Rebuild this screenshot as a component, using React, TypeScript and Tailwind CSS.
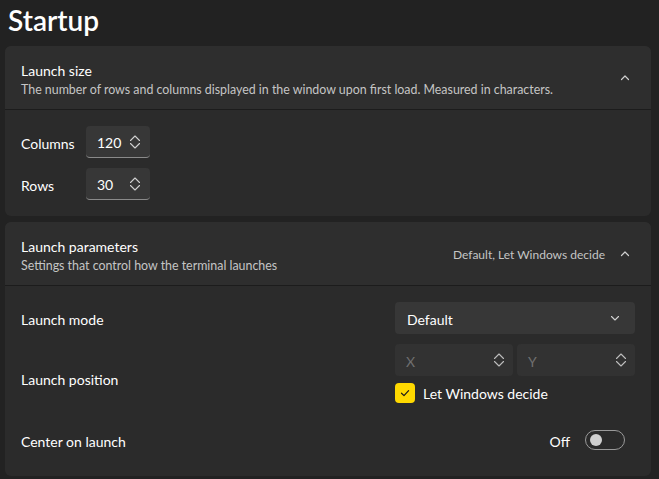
import React from "react"

const font = { fontFamily: 'Lato, "Noto Sans", sans-serif' }

function ChevronUp() {
  return (
    <svg width="12" height="12" viewBox="0 0 12 12" fill="none" className="text-[#d0d0d0]">
      <path d="M2.5 7.5 L6 4 L9.5 7.5" stroke="currentColor" strokeWidth="1.2" strokeLinecap="round" strokeLinejoin="round" />
    </svg>
  )
}

function ChevronDown() {
  return (
    <svg width="12" height="12" viewBox="0 0 12 12" fill="none" className="text-[#d0d0d0]">
      <path d="M2.5 4.5 L6 8 L9.5 4.5" stroke="currentColor" strokeWidth="1.1" strokeLinecap="round" strokeLinejoin="round" />
    </svg>
  )
}

function Spinner({ dim }: { dim?: boolean }) {
  return (
    <svg width="12" height="16" viewBox="0 0 12 16" fill="none" className={dim ? "text-[#bdbdbd]" : "text-[#cfcfcf]"}>
      <path d="M1.5 6.5 L6 2 L10.5 6.5" stroke="currentColor" strokeWidth="1.1" strokeLinecap="round" strokeLinejoin="round" />
      <path d="M1.5 9.5 L6 14 L10.5 9.5" stroke="currentColor" strokeWidth="1.1" strokeLinecap="round" strokeLinejoin="round" />
    </svg>
  )
}

function NumberBox({ value }: { value: string }) {
  return (
    <div className="flex h-[32px] w-[64px] items-center justify-between rounded-[4px] border-b border-[#8a8a8a] bg-[#373737] pl-[11px] pr-[9px]">
      <span className="pt-[2px] text-[14px] text-white">{value}</span>
      <Spinner />
    </div>
  )
}

function CardHeader({ title, desc, value }: { title: string; desc: string; value?: string }) {
  return (
    <div className="flex h-[64px] items-center justify-between border-b border-[#1c1c1c] bg-[#2e2e2e] pl-[16px] pr-[20px]">
      <div className="flex flex-col pt-[3px]">
        <span className="text-[14px] leading-[20px] text-white">{title}</span>
        <span className="pt-[1px] text-[12.4px] leading-[16px] text-[#c5c5c5]">{desc}</span>
      </div>
      <div className="flex items-center gap-[14px]">
        {value && <span className="pt-[2px] text-[12px] text-[#c5c5c5]">{value}</span>}
        <ChevronUp />
      </div>
    </div>
  )
}

export default function App() {
  return (
    <div className="h-[479px] w-[659px] overflow-hidden bg-[#222222] text-white" style={font}>
      <div className="flex h-[46px] items-start pl-[8px]">
        <h1 className="text-[28px] font-semibold leading-[40px]">Startup</h1>
      </div>

      <div className="ml-[5px] flex w-[646px] flex-col gap-[6px]">
        <div className="overflow-hidden rounded-[6px] bg-[#2b2b2b]">
          <CardHeader
            title="Launch size"
            desc="The number of rows and columns displayed in the window upon first load. Measured in characters."
          />
          <div className="flex flex-col gap-[10px] px-[16px] py-[16px]">
            <div className="flex items-center">
              <span className="w-[65px] pt-[2px] text-[14px]">Columns</span>
              <NumberBox value="120" />
            </div>
            <div className="flex items-center">
              <span className="w-[65px] pt-[2px] text-[14px]">Rows</span>
              <NumberBox value="30" />
            </div>
          </div>
        </div>

        <div className="overflow-hidden rounded-[6px] bg-[#2b2b2b]">
          <CardHeader
            title="Launch parameters"
            desc="Settings that control how the terminal launches"
            value="Default, Let Windows decide"
          />
          <div className="flex flex-col pl-[16px] pr-[16px] pt-[16px] pb-[16px]">
            <div className="flex h-[32px] items-center justify-between">
              <span className="pt-[3px] text-[14px]">Launch mode</span>
              <div className="flex h-[32px] w-[240px] items-center justify-between rounded-[4px] bg-[#373737] pl-[12px] pr-[14px]">
                <span className="pt-[2px] text-[14px]">Default</span>
                <ChevronDown />
              </div>
            </div>

            <div className="mt-[10px] flex items-center justify-between">
              <span className="mt-[10px] text-[14px]">Launch position</span>
              <div className="flex w-[240px] flex-col gap-[6px]">
                <div className="flex gap-[4px]">
                  <div className="flex h-[32px] w-[118px] items-center justify-between rounded-[4px] bg-[#323232] pl-[11px] pr-[8px]">
                    <span className="pt-[2px] text-[14px] text-[#6f6f6f]">X</span>
                    <Spinner dim />
                  </div>
                  <div className="flex h-[32px] w-[118px] items-center justify-between rounded-[4px] bg-[#323232] pl-[11px] pr-[8px]">
                    <span className="pt-[2px] text-[14px] text-[#6f6f6f]">Y</span>
                    <Spinner dim />
                  </div>
                </div>
                <div className="flex items-center gap-[8px]">
                  <div className="flex h-[20px] w-[20px] items-center justify-center rounded-[4px] bg-[#ffd900]">
                    <svg width="12" height="12" viewBox="0 0 12 12" fill="none">
                      <path d="M2.5 6.2 L5 8.6 L9.6 3.6" stroke="#1a1a1a" strokeWidth="1.2" strokeLinecap="round" strokeLinejoin="round" />
                    </svg>
                  </div>
                  <span className="pt-[1px] text-[14px]">Let Windows decide</span>
                </div>
              </div>
            </div>

            <div className="mt-[16px] flex h-[40px] items-center justify-between">
              <span className="pt-[3px] text-[14px]">Center on launch</span>
              <div className="mr-[10px] flex items-center gap-[15px]">
                <span className="pt-[2px] text-[14px]">Off</span>
                <div className="flex h-[20px] w-[40px] items-center rounded-full border border-[#9a9a9a] pl-[4px]">
                  <div className="h-[12px] w-[12px] rounded-full bg-[#d0d0d0]" />
                </div>
              </div>
            </div>
          </div>
        </div>
      </div>
    </div>
  )
}
